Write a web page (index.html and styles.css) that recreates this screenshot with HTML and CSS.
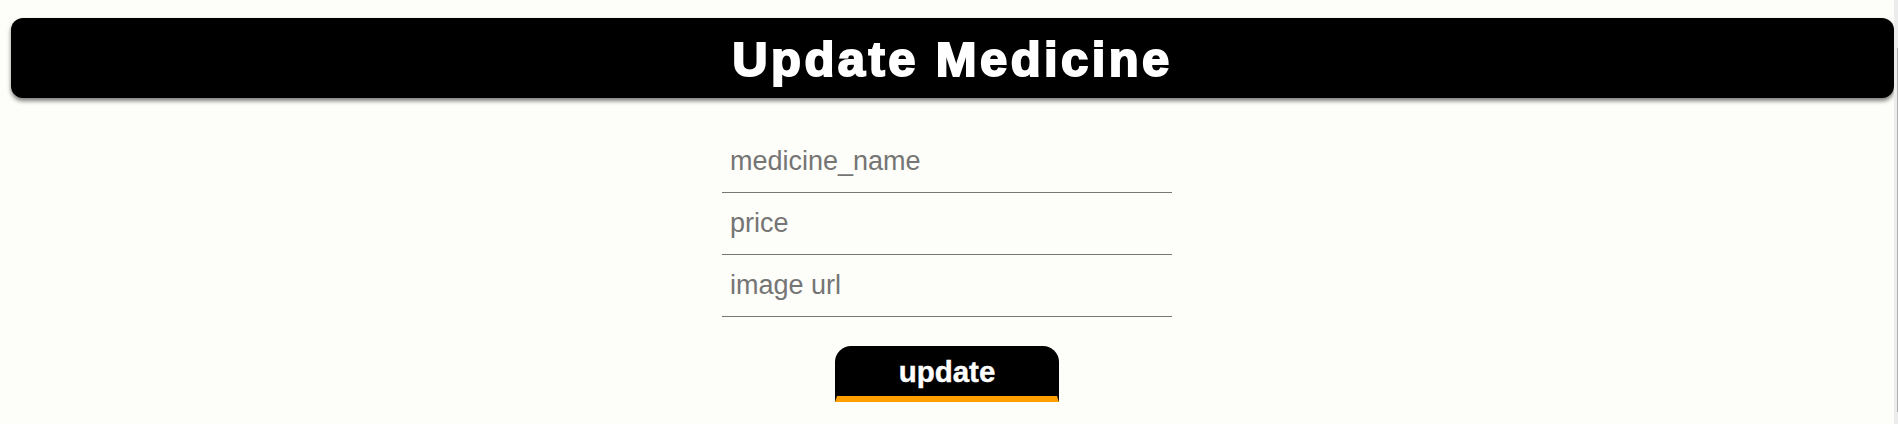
FILE: index.html
```html
<!DOCTYPE html>
<html>
<head>
<meta charset="utf-8">
<title>Update Medicine</title>
<link rel="stylesheet" href="styles.css">
</head>
<body>
<div class="page">
  <h1 class="title">Update Medicine</h1>
  <form class="form">
    <input class="field" type="text" placeholder="medicine_name">
    <input class="field" type="text" placeholder="price">
    <input class="field" type="text" placeholder="image url">
    <button class="btn" type="button">update</button>
  </form>
</div>
<div class="scrollbar"><div class="thumb"></div></div>
</body>
</html>
```

FILE: styles.css
```css
html, body {
  margin: 0;
  padding: 0;
  background: #fdfdf9;
  height: 100%;
  overflow: hidden;
}

.page {
  margin-right: 4px;
  padding-top: 18px;
}

.title {
  margin: 0 0 0 11px;
  height: 80px;
  background: #000;
  color: #fff;
  border-radius: 12px;
  box-shadow: 0 3px 4px rgba(0, 0, 0, 0.5);
  display: flex;
  align-items: center;
  justify-content: center;
  font-family: "Arial Black", "Liberation Sans", Arial, sans-serif;
  font-weight: bold;
  font-size: 49px;
  letter-spacing: 3.4px;
  -webkit-text-stroke: 2px #fff;
  line-height: 1;
  padding-top: 2px;
  box-sizing: border-box;
}

.form {
  display: flex;
  flex-direction: column;
  align-items: center;
  margin-top: 33px;
}

.field {
  box-sizing: border-box;
  width: 450px;
  height: 62px;
  margin: 0;
  padding: 0 8px;
  border: none;
  border-bottom: 1px solid #777;
  background: transparent;
  font-family: "Liberation Sans", Arial, sans-serif;
  font-size: 27px;
  color: #333;
  outline: none;
}

.field::placeholder {
  color: #757575;
}

.btn {
  box-sizing: border-box;
  margin-top: 29px;
  width: 224px;
  height: 56px;
  background: #000;
  color: #fff;
  border: 2px solid #000;
  border-bottom: 6px solid #ffa000;
  border-radius: 16px 16px 0 0;
  font-family: "Liberation Sans", Arial, sans-serif;
  font-weight: bold;
  font-size: 29.5px;
  -webkit-text-stroke: 0.4px #fff;
  padding: 0;
  cursor: pointer;
}

.scrollbar {
  position: fixed;
  top: 0;
  right: 0;
  bottom: 0;
  width: 4px;
  background: #ececec;
}

.thumb {
  position: absolute;
  top: 48px;
  bottom: 12px;
  right: 0;
  width: 1px;
  background: #b0b0b0;
}
```
